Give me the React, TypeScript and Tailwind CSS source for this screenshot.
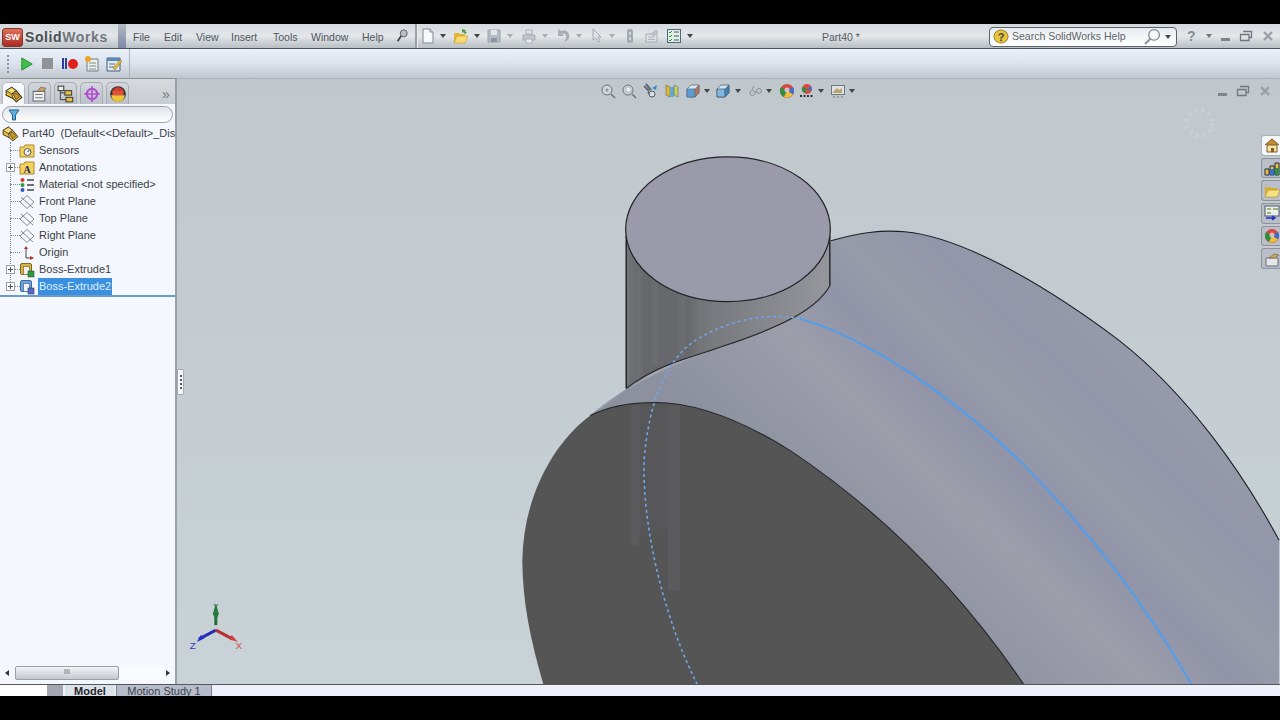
import type { ReactNode } from "react";

const font = "font-['Liberation_Sans',Arial,sans-serif]";

function Ico({ children, size = 16, className = "" }: { children: ReactNode; size?: number; className?: string }) {
  return (
    <svg width={size} height={size} viewBox="0 0 16 16" className={`shrink-0 ${className}`}>
      {children}
    </svg>
  );
}

const Arrow = ({ className = "", color = "#444" }: { className?: string; color?: string }) => (
  <svg width="6" height="4" viewBox="0 0 6 4" className={`shrink-0 ${className}`}>
    <path d="M0 0h6L3 4z" fill={color} />
  </svg>
);

const Doc = () => (
  <Ico>
    <path d="M3 1h7l3 3v11H3z" fill="#f6f8fb" stroke="#7d8794" />
    <path d="M10 1v3h3" fill="#dfe4ea" stroke="#7d8794" />
  </Ico>
);
const Folder = () => (
  <Ico>
    <path d="M1 5h5l1 1h5v2H4L2 14H1z" fill="#e3b53a" />
    <path d="M4 8h11l-3 7H1z" fill="#f7dc72" stroke="#c49a2b" strokeWidth=".6" />
    <path d="M9 1l4 1-1 1 2 2-2 1-2-2-1 1z" fill="#45a53b" />
  </Ico>
);
const Save = () => (
  <Ico>
    <path d="M2 2h12v12H2z" fill="#b6bcc5" stroke="#98a0aa" />
    <path d="M5 2h6v5H5z" fill="#e3e6ea" />
    <path d="M5 10h6v4H5z" fill="#8f969f" />
  </Ico>
);
const Printer = () => (
  <Ico>
    <path d="M5 2h6v4H5z" fill="#e0e3e7" stroke="#aab0b8" />
    <path d="M2 7h12v5H2z" fill="#c2c7cd" stroke="#a5abb3" />
    <path d="M5 11h6v4H5z" fill="#eceef0" stroke="#aab0b8" />
  </Ico>
);
const Undo = () => (
  <Ico>
    <path d="M3 2v6h6L7 6c3-1 5 1 4 4l-2 4c4-1 6-4 5-8-1-3-5-5-8-3L4 1z" fill="#a9afb7" />
  </Ico>
);
const Pointer = () => (
  <Ico>
    <path d="M5 1v11l3-2 2 4 2-1-2-4h3z" fill="#dfe2e6" stroke="#a3a9b1" />
  </Ico>
);
const Traffic = () => (
  <Ico>
    <rect x="5" y="1" width="6" height="14" rx="2.5" fill="#a3a9b0" />
    <path d="M7 4h2v3H7zM7 9h2v3H7z" fill="#d2d6da" />
  </Ico>
);
const OptionsCard = () => (
  <Ico>
    <path d="M2 6h11v8H2z" fill="#dfe2e6" stroke="#a6acb4" />
    <path d="M7 6l5-4 2 2-4 4z" fill="#bfc4ca" stroke="#a6acb4" strokeWidth=".6" />
    <path d="M4 9h7M4 11.500h7" stroke="#aeb3ba" />
  </Ico>
);
const Checklist = () => (
  <Ico>
    <rect x="1.500" y="1.500" width="13" height="13" fill="#dff0e2" stroke="#4b6a86" />
    <path d="M3 4l1 1 2-2M3 8l1 1 2-2M3 12l1 1 2-2" stroke="#2f8f46" fill="none" />
    <path d="M8 4h5M8 8h5M8 12h5" stroke="#47586a" />
  </Ico>
);
const Magnifier = ({ dots = false }: { dots?: boolean }) => (
  <Ico>
    <circle cx="7" cy="7" r="5" fill="#cfd6dc" stroke="#69727c" />
    {dots ? <circle cx="7" cy="7" r="1.500" fill="#8e97a0" /> : <path d="M5 4h3l2 2v3H5z" fill="#eef1f3" stroke="#8e97a0" strokeWidth=".6" />}
    <path d="M11 11l4 4" stroke="#69727c" strokeWidth="1.500" />
  </Ico>
);
const PrevView = () => (
  <Ico>
    <path d="M2 3l5 5M4 1l5 6M6 9l4 5" stroke="#5e6c7a" strokeWidth="2" />
    <circle cx="10" cy="11" r="3" fill="#d6dde3" stroke="#4f5b68" />
    <path d="M10 5l5-3-1 5z" fill="#3f86c8" />
  </Ico>
);
const Section = () => (
  <Ico>
    <path d="M2 2l4 2v10l-4-2z" fill="#e2b53c" stroke="#5d6b36" strokeWidth=".6" />
    <path d="M6 4h4v10H6z" fill="#66a9cf" />
    <path d="M10 2l4 2v10l-4-2z" fill="#c9cf5a" stroke="#4a6c7d" strokeWidth=".6" />
  </Ico>
);
const ViewCube = () => (
  <Ico>
    <path d="M2 6l4-4h8v8l-4 4H2z" fill="#dfe7ee" stroke="#55606b" strokeWidth=".7" />
    <path d="M2 6h8v8H2z" fill="#5d9ed2" stroke="#3e6f99" strokeWidth=".7" />
    <path d="M10 6l4-4v8l-4 4z" fill="#b5745c" stroke="#55606b" strokeWidth=".5" />
  </Ico>
);
const ShadedCube = () => (
  <Ico>
    <path d="M2 6l4-4h8v8l-4 4H2z" fill="#cfe3f2" stroke="#46586a" strokeWidth=".7" />
    <path d="M2 6h8v8H2z" fill="#7eb7e2" stroke="#46586a" strokeWidth=".7" />
    <path d="M10 6l4-4v8l-4 4z" fill="#3f7fb5" stroke="#46586a" strokeWidth=".5" />
  </Ico>
);
const Glasses = () => (
  <Ico>
    <circle cx="4.500" cy="10" r="2.500" fill="none" stroke="#8b929a" />
    <circle cx="11" cy="8" r="2.500" fill="none" stroke="#8b929a" />
    <path d="M4 7l2-4M7 9h1.500" stroke="#8b929a" fill="none" />
  </Ico>
);
const Ball = ({ size = 16 }: { size?: number }) => (
  <Ico size={size}>
    <circle cx="8" cy="8" r="7" fill="#d84a3c" />
    <path d="M8 8L2 4a7 7 0 0 0 3 10z" fill="#2f8f3e" />
    <path d="M8 8l-3 6a7 7 0 0 0 9-3z" fill="#e8c33a" />
    <path d="M8 8l6 3a7 7 0 0 0 0-7z" fill="#3a6fd0" />
    <circle cx="8" cy="7" r="2.500" fill="#eef" opacity=".65" />
  </Ico>
);
const Scene = () => (
  <Ico>
    <circle cx="8" cy="6" r="5" fill="#d84a3c" />
    <path d="M8 6L3 4a5 5 0 0 0 3 6z" fill="#2f8f3e" />
    <path d="M8 6l4 2a5 5 0 0 0 0-5z" fill="#3a6fd0" />
    <path d="M1 13h14" stroke="#333" strokeWidth="2" strokeDasharray="2 1.500" />
  </Ico>
);
const ScreenCam = () => (
  <Ico>
    <rect x="1.500" y="2.500" width="13" height="9" fill="#dfe3e6" stroke="#6e767e" />
    <path d="M3 9l4-4 2 2 3-2v5H3z" fill="#b8a56a" />
    <path d="M3 14h2M7 14h2M11 14h2" stroke="#6e767e" />
  </Ico>
);
const PartIcon = ({ size = 18 }: { size?: number }) => (
  <Ico size={size}>
    <path d="M1 5l5-3 4 3 5 6-5 4-3-3-6-3z" fill="#e6bb3a" stroke="#3b3320" strokeWidth=".9" />
    <path d="M6 2l4 3-4 3-5-3zM10 5l-4 3 1 4" fill="#f2d976" stroke="#3b3320" strokeWidth=".7" />
    <path d="M7 8l3-1 3 3-3 3z" fill="#c9962b" stroke="#3b3320" strokeWidth=".6" />
  </Ico>
);
const Boss = ({ selected = false }: { selected?: boolean }) => {
  const fill = selected ? "#6fa2d6" : "#d9b443";
  const dark = selected ? "#3b6aa0" : "#7d6a24";
  return (
    <Ico>
      <rect x="1.500" y="1.500" width="11" height="11" rx="1.500" fill={fill} stroke={dark} />
      <rect x="4.500" y="4.500" width="6" height="8" fill="#eef2f6" stroke={dark} strokeWidth=".7" />
      <rect x="9" y="9" width="6" height="6" fill={selected ? "#5566cc" : "#2f9a3c"} stroke="#1f3a2a" strokeWidth=".5" />
    </Ico>
  );
};
const Plane = () => (
  <Ico>
    <path d="M8 1.500L15 8l-7 6.500L1 8z" fill="none" stroke="#7a7f86" strokeWidth=".9" />
    <path d="M2 3l12 11" stroke="#555a60" strokeWidth=".7" />
  </Ico>
);

const Plus = () => (
  <svg width="9" height="9" viewBox="0 0 9 9" className="shrink-0 bg-white">
    <rect x=".5" y=".5" width="8" height="8" fill="#fff" stroke="#98a0a8" />
    <path d="M2 4.500h5M4.500 2v5" stroke="#555" />
  </svg>
);

type Node = { label: string; icon: ReactNode; expand?: boolean; selected?: boolean };

const tree: Node[] = [
  {
    label: "Sensors",
    icon: (
      <Ico>
        <path d="M1 4h4l1-2h9v12H1z" fill="#f2d35c" stroke="#ad8a2a" />
        <circle cx="8.500" cy="9" r="3.500" fill="#eef1f3" stroke="#5c5c5c" />
        <path d="M8.500 9l2-2" stroke="#333" />
      </Ico>
    ),
  },
  {
    label: "Annotations",
    expand: true,
    icon: (
      <Ico>
        <path d="M1 4h4l1-2h9v12H1z" fill="#f2d35c" stroke="#ad8a2a" />
        <text x="8" y="13" textAnchor="middle" fontSize="10" fontWeight="700" fontFamily="Liberation Serif" fill="#1d2a6a">A</text>
      </Ico>
    ),
  },
  {
    label: "Material <not specified>",
    icon: (
      <Ico>
        <circle cx="3.500" cy="3" r="2" fill="#d8342c" />
        <circle cx="3.500" cy="8" r="2" fill="#2e9a3e" />
        <circle cx="3.500" cy="13" r="2" fill="#2e55c0" />
        <path d="M8 3h7M8 8h7M8 13h7" stroke="#444" strokeWidth="1.300" />
      </Ico>
    ),
  },
  { label: "Front Plane", icon: <Plane /> },
  { label: "Top Plane", icon: <Plane /> },
  { label: "Right Plane", icon: <Plane /> },
  {
    label: "Origin",
    icon: (
      <Ico>
        <path d="M7 2v11h7" fill="none" stroke="#444" />
        <path d="M5 4l2-3 2 3z" fill="#b3352c" />
        <path d="M11 11l4 2-4 2z" fill="#b3352c" />
      </Ico>
    ),
  },
  { label: "Boss-Extrude1", expand: true, icon: <Boss /> },
  { label: "Boss-Extrude2", expand: true, selected: true, icon: <Boss selected /> },
];

const tabs: ReactNode[] = [
  <PartIcon size={18} />,
  <Ico size={17}>
    <path d="M2 6h11v9H2z" fill="#eef0f2" stroke="#6a6f76" />
    <path d="M4 9h7M4 12h7" stroke="#777" />
    <path d="M6 6l3-4 5 1-2 3z" fill="#c7a06a" stroke="#6a5a3a" strokeWidth=".6" />
  </Ico>,
  <Ico size={18}>
    <path d="M3 3v10h5M3 7h4" fill="none" stroke="#555" />
    <rect x="1" y="1" width="5" height="4" fill="#eee" stroke="#444" />
    <rect x="7" y="5" width="6" height="4" fill="#e8c33a" stroke="#444" />
    <rect x="8" y="11" width="6" height="4" fill="#e8c33a" stroke="#444" />
  </Ico>,
  <Ico size={18}>
    <circle cx="8" cy="8" r="4.500" fill="none" stroke="#b050d0" strokeWidth="2" />
    <path d="M8 1v14M1 8h14" stroke="#b050d0" strokeWidth="1.500" />
  </Ico>,
  <Ico size={18}>
    <circle cx="8" cy="8" r="7" fill="#333" />
    <path d="M8 2a6 6 0 0 1 5 3H3a6 6 0 0 1 5-3z" fill="#d83a2c" />
    <path d="M3 5h10v4H3z" fill="#e0503a" />
    <path d="M2 9h12a6 6 0 0 1-12 0z" fill="#eec43a" />
  </Ico>,
];

function TitleBar() {
  const menus = [
    ["File", "w-[31px]"],
    ["Edit", "w-[32px]"],
    ["View", "w-[35px]"],
    ["Insert", "w-[42px]"],
    ["Tools", "w-[38px]"],
    ["Window", "w-[51px]"],
    ["Help", "w-[35px]"],
  ];
  return (
    <div className="h-[25px] flex items-center bg-gradient-to-b from-[#d4d8dc] via-[#e4e7ea] to-[#b9bfc4] border-b border-[#4e5257]">
      <div className="w-[118px] flex items-center pl-[2px] pt-[2px]">
        <div className="w-[21px] h-[19px] rounded-[3px] bg-gradient-to-b from-[#e0705c] to-[#a82a20] border border-[#7f3a30] flex items-center justify-center text-[9px] font-bold leading-none text-white">
          SW
        </div>
        <span className="ml-[2px] text-[14px] font-bold tracking-[0.6px] text-[#71767c]">
          <span className="text-[#4a4e55]">Solid</span>Works
        </span>
      </div>
      <div className="w-[8px] h-full bg-gradient-to-b from-[#b4b8bf] to-[#7d89a6]" />
      <div className="flex ml-[7px] pt-[3px] text-[10.500px] text-[#4f565e]">
        {menus.map(([m, w]) => (
          <span key={m} className={w}>
            {m}
          </span>
        ))}
      </div>
      <Ico size={14} className="-ml-[2px]">
        <circle cx="10" cy="5" r="4" fill="#b9bfc6" stroke="#555" />
        <path d="M7 8l-4 6" stroke="#444" strokeWidth="2" />
      </Ico>
      <div className="w-[3px] h-full ml-[6px] bg-[#9aa0a6] border-r border-[#eceef0]" />
      <div className="flex items-center ml-[2px]">
        <Doc />
        <Arrow className="ml-[4px] mr-[7px]" />
        <Folder />
        <Arrow className="ml-[5px] mr-[6px]" />
        <Save />
        <Arrow className="ml-[5px] mr-[8px]" color="#a8adb3" />
        <Printer />
        <Arrow className="ml-[5px] mr-[7px]" color="#a8adb3" />
        <Undo />
        <Arrow className="ml-[5px] mr-[6px]" color="#a8adb3" />
        <Pointer />
        <Arrow className="ml-[5px] mr-[7px]" color="#a8adb3" />
        <Traffic />
        <div className="w-[6px]" />
        <OptionsCard />
        <div className="w-[6px]" />
        <Checklist />
        <Arrow className="ml-[5px]" />
      </div>
      <span className="ml-[129px] w-[167px] pt-[3px] text-[10.500px] text-[#555b62]">Part40 *</span>
      <div className="w-[188px] h-[20px] mt-[1px] flex items-center rounded-[4px] border border-[#5b646c] bg-gradient-to-b from-[#e8ecef] to-[#ffffff] pl-[3px]">
        <Ico>
          <ellipse cx="8" cy="7.500" rx="7" ry="6.500" fill="#e9c53c" stroke="#9c7f22" />
          <path d="M5 14l1-3 3 1z" fill="#e9c53c" />
          <text x="8" y="11.500" textAnchor="middle" fontSize="11" fontWeight="700" fontFamily="Liberation Sans" fill="#444">?</text>
        </Ico>
        <span className="ml-[3px] w-[116px] whitespace-nowrap text-[10.500px] text-[#5f656b]">Search SolidWorks Help</span>
        <Ico size={17} className="ml-[16px]">
          <circle cx="9.500" cy="6.500" r="5" fill="#f4f8fb" stroke="#7f8b94" strokeWidth="1.200" />
          <path d="M6 10l-5 5" stroke="#8d979f" strokeWidth="2" />
        </Ico>
        <Arrow className="ml-[4px]" />
      </div>
      <span className="ml-[10px] text-[14px] font-bold leading-none text-[#858b92]">?</span>
      <Arrow className="ml-[10px]" color="#70767c" />
      <WindowButtons className="ml-[9px]" />
    </div>
  );
}

function WindowButtons({ className = "" }: { className?: string }) {
  return (
    <div className={`flex items-center gap-[9px] ${className}`}>
      <div className="w-[9px] h-[3px] mt-[6px] bg-[#7e848b]" />
      <svg width="14" height="12" viewBox="0 0 14 12" className="shrink-0">
        <path d="M4 1.500h8.500v6H10M1.500 4.500H10v6H1.500z" fill="none" stroke="#71777e" strokeWidth="1.300" />
      </svg>
      <svg width="12" height="12" viewBox="0 0 12 12" className="shrink-0">
        <path d="M2 2l8 8M10 2l-8 8" stroke="#9aa0a6" strokeWidth="2.400" />
      </svg>
    </div>
  );
}

function CommandBar() {
  return (
    <div className="h-[29px] flex bg-gradient-to-b from-[#eaf0f9] via-[#dce3ee] to-[#c0c7ce]">
      <div className="w-[130px] flex items-center border-r border-[#aeb4ba] pl-[7px]">
        <div className="w-[2px] h-[18px] border-l-2 border-dotted border-[#8d939a]" />
        <Ico size={14} className="ml-[11px]">
          <path d="M2 1l12 7-12 7z" fill="#3fbf48" stroke="#1f8c2e" />
        </Ico>
        <div className="w-[11px] h-[11px] ml-[8px] bg-[#8f9297]" />
        <div className="w-[2px] h-[11px] ml-[9px] bg-[#2c3f9c]" />
        <div className="w-[2px] h-[11px] ml-[1px] bg-[#2c3f9c]" />
        <div className="w-[10px] h-[10px] ml-[1px] rounded-full bg-[#e0201c]" />
        <Ico size={16} className="ml-[6px]">
          <path d="M3 3h11v12H3z" fill="#eef0e6" stroke="#6d7a86" />
          <path d="M5 7h7M5 10h7M5 13h7" stroke="#7f8c97" />
          <circle cx="4" cy="3" r="3" fill="#f0a42a" />
        </Ico>
        <Ico size={16} className="ml-[6px]">
          <path d="M1 2h13v13H1z" fill="#dfe9f2" stroke="#3e5f80" />
          <path d="M1 2h13v3H1z" fill="#5b88b5" />
          <path d="M3 8h6M3 11h6" stroke="#5b7389" />
          <path d="M7 12l7-8 2 1-7 9z" fill="#e8b838" stroke="#8c6a1d" strokeWidth=".5" />
        </Ico>
      </div>
      <div className="flex-1" />
    </div>
  );
}

function FeatureTree() {
  return (
    <div className="w-[177px] shrink-0 flex flex-col bg-[#f5f7fe] border-t border-r-2 border-[#8f9499] border-r-[#9aa0a5] relative z-10">
      <div className="h-[25px] flex items-end gap-[3px] pl-[2px] bg-gradient-to-b from-[#d6dade] to-[#c8cdd3]">
        {tabs.map((t, i) => (
          <div
            key={i}
            className={`w-[23px] h-[22px] flex items-center justify-center rounded-t-[5px] border border-b-0 ${
              i === 0 ? "bg-[#f7f9fe] border-[#b4bac0]" : "bg-gradient-to-b from-[#d3d7dd] to-[#bcc1ca] border-[#a6acb3]"
            }`}
          >
            {t}
          </div>
        ))}
        <span className="ml-[30px] mb-[2px] text-[14px] leading-[16px] text-[#71777e]">»</span>
      </div>
      <div className="h-[17px] mx-[2px] mt-[2px] flex items-center rounded-full border border-[#9aa2aa] bg-gradient-to-b from-[#dfe4e9] to-[#ffffff] pl-[5px]">
        <svg width="12" height="12" viewBox="0 0 12 12">
          <path d="M1 1h10L7.500 6v5h-3V6z" fill="#5fb0dd" stroke="#1f5f95" />
        </svg>
      </div>
      <div className="flex items-center h-[17px] mt-[2px] pl-[2px] text-[11px] text-[#3b3f44]">
        <PartIcon size={17} />
        <span className="ml-[3px] whitespace-pre overflow-hidden">Part40  (Default&lt;&lt;Default&gt;_Dis</span>
      </div>
      <div className="relative">
        <div className="absolute left-[10px] top-0 h-[144px] border-l border-dotted border-[#858b92]" />
        {tree.map((n) => (
          <div key={n.label} className="flex items-center h-[17px] relative text-[11px] text-[#3b3f44]">
            <div className="w-[10px] border-t border-dotted border-[#858b92] ml-[10px] shrink-0" />
            {n.expand && (
              <span className="absolute left-[6px] top-[4px]">
                <Plus />
              </span>
            )}
            <span className="-ml-[1px]">{n.icon}</span>
            <span className={`ml-[3px] px-[1px] ${n.selected ? "bg-[#3a8fe0] text-[#dff0ff]" : ""}`}>{n.label}</span>
          </div>
        ))}
      </div>
      <div className="h-[2px] bg-[#6c9ac6]" />
      <div className="flex-1" />
      <div className="h-[15px] mb-[4px] flex items-center px-[4px]">
        <Arrow className="rotate-90" color="#333" />
        <div className="ml-[5px] w-[104px] h-[14px] flex items-center justify-center rounded-[2px] border border-[#99a0a7] bg-gradient-to-b from-[#f2f4f6] to-[#c4c8cd] text-[7px] text-[#555]">
          III
        </div>
        <div className="flex-1 h-[14px] bg-[#f9fafe]" />
        <Arrow className="-rotate-90 ml-[2px]" color="#333" />
      </div>
      <div className="absolute -right-[9px] top-[290px] w-[7px] h-[26px] bg-[#f4f6fa] border border-[#a4aab0] rounded-r-[2px] flex items-center justify-center">
        <span className="w-[2px] h-[14px] border-l-2 border-dotted border-[#555]" />
      </div>
    </div>
  );
}

function Model() {
  return (
    <svg viewBox="177 78 1103 606" className="absolute inset-0 w-full h-full">
      <defs>
        <linearGradient id="band" gradientUnits="userSpaceOnUse" x1="1150" y1="250" x2="850" y2="560">
          <stop offset="0" stopColor="#a2a5ae" />
          <stop offset=".18" stopColor="#979aa9" />
          <stop offset=".34" stopColor="#9296aa" />
          <stop offset=".48" stopColor="#989ba8" />
          <stop offset=".58" stopColor="#9194a8" />
          <stop offset=".72" stopColor="#9c9eaa" />
          <stop offset="1" stopColor="#8d909e" />
        </linearGradient>
        <linearGradient id="neck" gradientUnits="userSpaceOnUse" x1="600" y1="410" x2="830" y2="300">
          <stop offset="0" stopColor="#a4a8b0" />
          <stop offset="1" stopColor="#9ba0a8" />
        </linearGradient>
        <linearGradient id="cyl" gradientUnits="userSpaceOnUse" x1="626" y1="0" x2="830" y2="0">
          <stop offset="0" stopColor="#747578" />
          <stop offset=".08" stopColor="#66676b" />
          <stop offset=".3" stopColor="#68696d" />
          <stop offset=".4" stopColor="#77787c" />
          <stop offset=".65" stopColor="#84858b" />
          <stop offset="1" stopColor="#96979d" />
        </linearGradient>
      </defs>
      {/* band of the big disc */}
      <path
        d="M590 415C610 398 622 392 640 379C660 368 690 358 725 345C770 330 815 310 831 240C860 232 880 229 905 231C960 236 1040 280 1120 340C1190 395 1245 475 1280 540V684H1024C960 590 880 510 790 450C740 420 700 402 655 402C630 402 610 405 590 415Z"
        fill="url(#band)"
      />
      <path d="M590 415C625 388 660 368 725 345C770 330 815 310 831 280L831 240L760 300L640 380Z" fill="url(#neck)" />
      {/* dark end face */}
      <path
        d="M590 415C610 405 630 402 655 402C700 402 750 425 790 450C880 510 960 590 1024 684H543C530 640 522 600 522 560C523 500 550 445 590 415Z"
        fill="#555555"
      />
      <path d="M631 405h9v125l-1 12 -2 3h-6zM668 405h12v185h-12z" fill="#616166" opacity=".55" />
      <path d="M640 405h28v125h-28z" fill="#5b5b5f" opacity=".45" />
      {/* boss */}
      <path d="M626 235V388C665 362 690 358 725 345C770 330 820 312 830 285V235Z" fill="url(#cyl)" />
      <path d="M640 235v150M655 235v130M682 235v120M700 235v115M715 235v110" stroke="#8a8b90" strokeOpacity=".12" strokeWidth="6" />
      <path d="M626 235V388M830 235V285" stroke="#16181c" strokeWidth="1.300" fill="none" />
      <ellipse cx="728" cy="228.500" rx="102.500" ry="72.500" fill="#9a9aab" stroke="#22242a" strokeWidth="1.200" />
      {/* edges */}
      <path d="M626 388C660 362 690 358 725 345C770 330 815 312 830 285" fill="none" stroke="#24262b" strokeWidth="1.100" />
      <path
        d="M590 415C610 405 630 402 655 402C700 402 750 425 790 450C880 510 960 590 1024 684"
        fill="none"
        stroke="#22242a"
        strokeWidth="1.100"
      />
      <path
        d="M831 240C860 232 880 229 905 231C960 236 1040 280 1120 340C1190 395 1245 475 1280 540"
        fill="none"
        stroke="#1e2026"
        strokeWidth="1.100"
      />
      {/* sketch */}
      <path d="M800 318C870 338 950 395 1020 460C1090 530 1150 610 1192 684" fill="none" stroke="#4e9ff0" strokeWidth="2" />
      <path
        d="M800 318C770 312 730 318 695 340C665 360 648 405 644 460C642 530 665 620 697 684"
        fill="none"
        stroke="#6ea6e8"
        strokeWidth="1.600"
        strokeDasharray="3 3"
      />
      {/* triad */}
      <path d="M215 625V614" stroke="#1f6b32" strokeWidth="3" />
      <path d="M215 603l-3 11 3 6 3-6z" fill="#237a3a" />
      <path d="M215 630l-17 9" stroke="#2430b8" strokeWidth="3" />
      <path d="M196 642l4-7 4 3z" fill="#2430c8" />
      <path d="M215 630l17 9" stroke="#b83030" strokeWidth="3" />
      <path d="M237 642l-6-7-3 4z" fill="#d04040" />
      <text x="215" y="609" textAnchor="middle" fontSize="8" fill="#2a6a3a" fontFamily="Liberation Sans">Y</text>
      <text x="192" y="649" textAnchor="middle" fontSize="10" fill="#3a3ac0" fontFamily="Liberation Sans">Z</text>
      <text x="238" y="649" textAnchor="middle" fontSize="10" fill="#d05050" fontFamily="Liberation Sans">X</text>
      {/* faint rotate marker */}
      <circle cx="1200" cy="122" r="13" fill="none" stroke="#c8d0d4" strokeWidth="5" strokeDasharray="3 4" />
    </svg>
  );
}

function HeadsUp() {
  return (
    <div className="absolute left-[423px] top-[4px] flex items-center h-[16px]">
      <Magnifier dots />
      <div className="w-[5px]" />
      <Magnifier />
      <div className="w-[5px]" />
      <PrevView />
      <div className="w-[6px]" />
      <Section />
      <div className="w-[5px]" />
      <ViewCube />
      <Arrow className="ml-[3px] mr-[5px]" />
      <ShadedCube />
      <Arrow className="ml-[4px] mr-[7px]" />
      <Glasses />
      <Arrow className="ml-[2px] mr-[7px]" />
      <Ball />
      <div className="w-[4px]" />
      <Scene />
      <Arrow className="ml-[3px] mr-[6px]" />
      <ScreenCam />
      <Arrow className="ml-[3px]" />
    </div>
  );
}

function TaskPane() {
  const items: ReactNode[] = [
    <Ico>
      <path d="M1 8l7-6 7 6" fill="#c88a3a" stroke="#7a4f1d" />
      <path d="M3 8h10v7H3z" fill="#f6e6a6" stroke="#7a5a2a" />
      <path d="M7 11h3v4H7z" fill="#8a5c22" />
    </Ico>,
    <Ico>
      <path d="M1 15V9h4v6zM6 15V6h4v9zM11 15V3h4v12z" fill="#e8c33a" stroke="#1f2a4a" />
      <path d="M6 15V9h4v6z" fill="#3a6fd0" />
      <path d="M11 15V8h4v7z" fill="#2f8f3e" />
    </Ico>,
    <Ico>
      <path d="M1 4h5l1 1h6v2H4L2 14H1z" fill="#d8b030" />
      <path d="M4 7h12l-3 7H1z" fill="#f8e07c" stroke="#b08a28" strokeWidth=".6" />
    </Ico>,
    <Ico>
      <rect x="1" y="1" width="14" height="10" fill="#e9edf0" stroke="#4f5a66" />
      <path d="M3 3h4v2H3zM9 3h5v2H9zM3 7h4v2H3z" fill="#9db86a" />
      <path d="M2 13h9M8 11l3 2-3 2" stroke="#1f2fc0" fill="none" strokeWidth="1.400" />
    </Ico>,
    <Ball />,
    <Ico>
      <path d="M2 7h12v8H2z" fill="#e5e7ea" stroke="#6a7078" />
      <path d="M5 7l5-4 5 1-4 3z" fill="#c9a860" stroke="#6a5a3a" strokeWidth=".6" />
    </Ico>,
  ];
  return (
    <div className="absolute right-0 top-[56px] flex flex-col gap-[2px]">
      {items.map((it, i) => (
        <div
          key={i}
          className={`w-[19px] h-[20.700px] flex items-center justify-start pl-[2px] rounded-l-[3px] border border-r-0 overflow-hidden ${
            i === 0 ? "bg-[#f6f7f8] border-[#aab0b6]" : "bg-[#b9bec9] border-[#8e949c]"
          }`}
        >
          {it}
        </div>
      ))}
    </div>
  );
}

export default function App() {
  return (
    <div className={`w-[1280px] h-[720px] bg-black flex flex-col overflow-hidden ${font}`}>
      <div className="h-[24px] shrink-0" />
      <TitleBar />
      <CommandBar />
      <div className="flex-1 flex min-h-0">
        <FeatureTree />
        <div className="flex-1 relative border-t border-[#aab0b6] bg-gradient-to-b from-[#c0c8cd] to-[#c9d2d6]">
          <Model />
          <HeadsUp />
          <WindowButtons className="absolute right-[9px] top-[6px]" />
          <TaskPane />
        </div>
      </div>
      <div className="h-[12px] shrink-0 flex items-start bg-[#f0f2fb] border-t border-[#54585c] text-[11px] leading-[12px] overflow-hidden">
        <div className="w-[47px] h-full bg-white" />
        <div className="w-[16px] h-full bg-[#a3a8b0]" />
        <div className="w-[50px] ml-[2px] h-full text-center font-bold text-[#24272b] bg-[#dce2ea]">Model</div>
        <div className="w-[96px] ml-[1px] h-full text-center text-[#3b3f4a] bg-[#b6bccb] border-x border-[#7b8088]">Motion Study 1</div>
      </div>
      <div className="h-[24px] shrink-0" />
    </div>
  );
}
